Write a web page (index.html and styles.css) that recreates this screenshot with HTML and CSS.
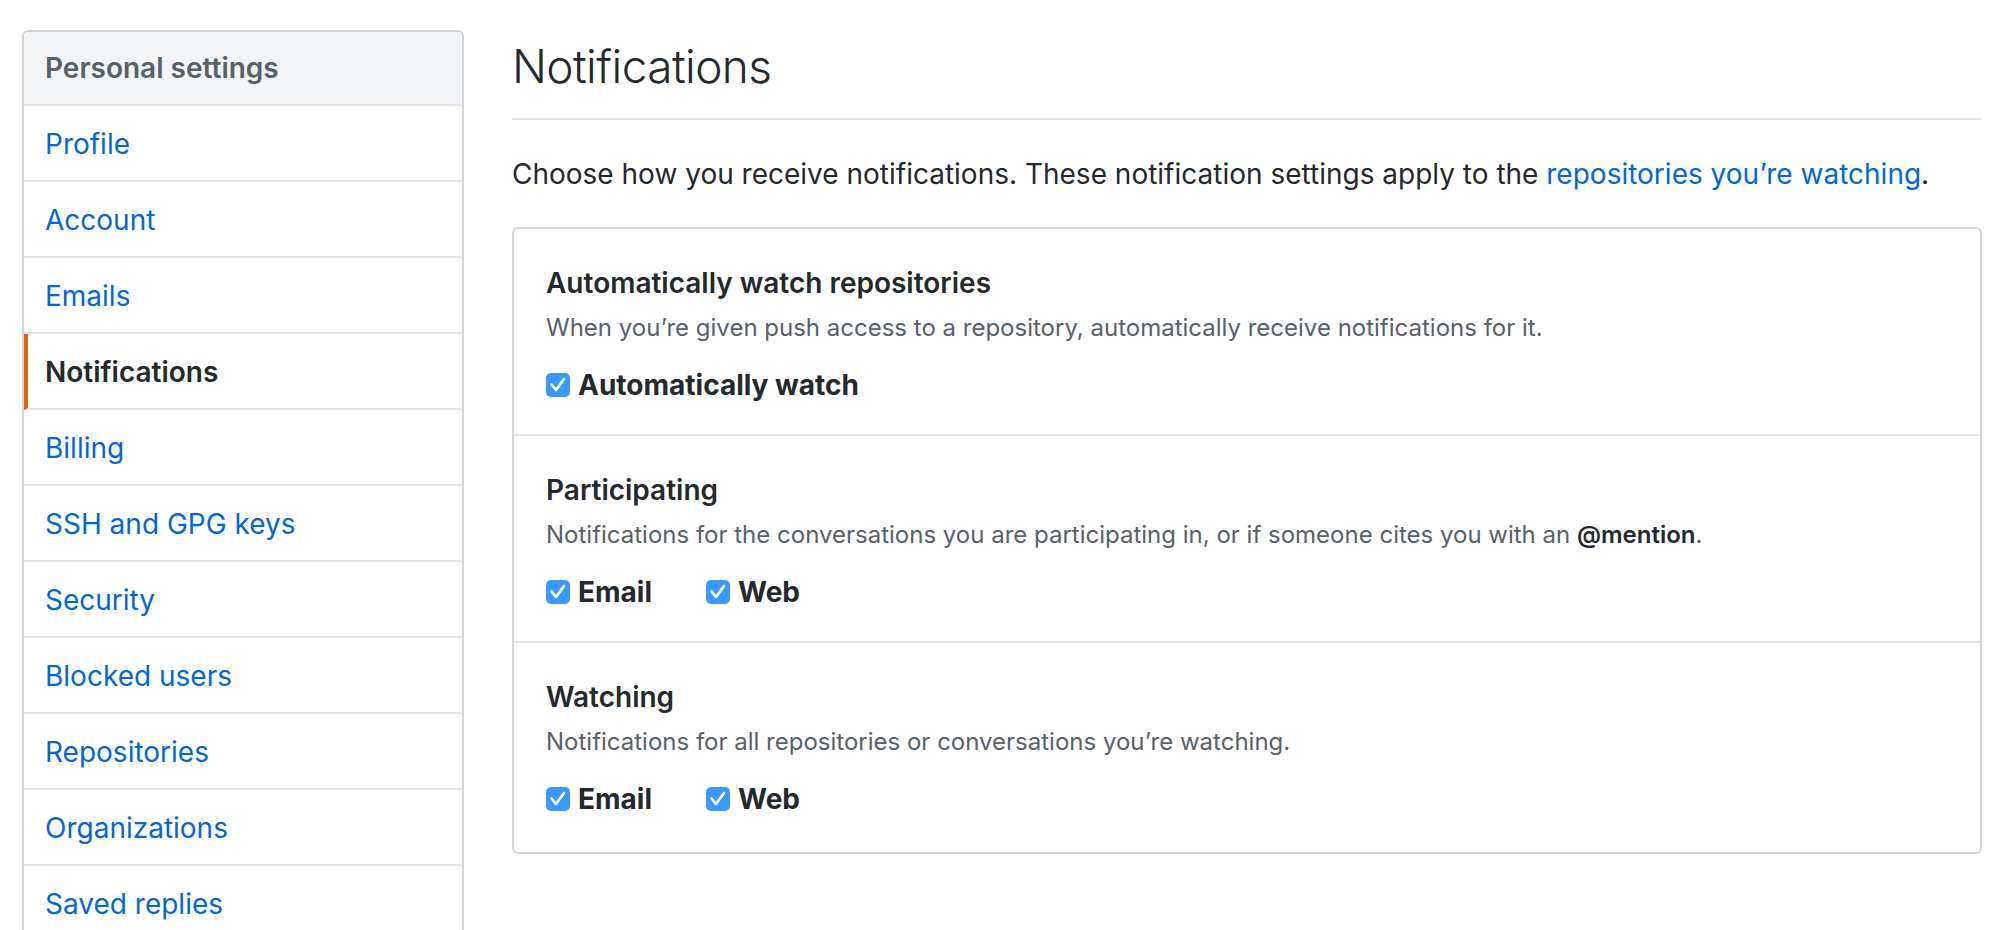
FILE: index.html
```html
<!DOCTYPE html>
<html lang="en">
<head>
    <meta charset="UTF-8">
    <title>Notifications settings</title>
    <link rel="stylesheet" href="styles.css">
</head>
<body>
    <div class="page">
        <nav class="menu">
            <div class="menu-heading">Personal settings</div>
            <a class="menu-item" href="#">Profile</a>
            <a class="menu-item" href="#">Account</a>
            <a class="menu-item" href="#">Emails</a>
            <a class="menu-item selected" href="#">Notifications</a>
            <a class="menu-item" href="#">Billing</a>
            <a class="menu-item" href="#">SSH and GPG keys</a>
            <a class="menu-item" href="#">Security</a>
            <a class="menu-item" href="#">Blocked users</a>
            <a class="menu-item" href="#">Repositories</a>
            <a class="menu-item" href="#">Organizations</a>
            <a class="menu-item" href="#">Saved replies</a>
        </nav>

        <main class="content">
            <h2 class="subhead">Notifications</h2>
            <p class="intro">Choose how you receive notifications. These notification settings apply to the <a href="#">repositories you’re watching</a>.</p>

            <div class="box">
                <div class="box-row">
                    <h4 class="row-title">Automatically watch repositories</h4>
                    <p class="note">When you’re given push access to a repository, automatically receive notifications for it.</p>
                    <div class="checks">
                        <label class="check"><span class="tick"><svg viewBox="0 0 24 24"><path d="M5.5 11.5 L10 17 L18 6"/></svg></span>Automatically watch</label>
                    </div>
                </div>
                <div class="box-row">
                    <h4 class="row-title">Participating</h4>
                    <p class="note">Notifications for the conversations you are participating in, or if someone cites you with an <strong>@mention</strong>.</p>
                    <div class="checks">
                        <label class="check"><span class="tick"><svg viewBox="0 0 24 24"><path d="M5.5 11.5 L10 17 L18 6"/></svg></span>Email</label>
                        <label class="check"><span class="tick"><svg viewBox="0 0 24 24"><path d="M5.5 11.5 L10 17 L18 6"/></svg></span>Web</label>
                    </div>
                </div>
                <div class="box-row">
                    <h4 class="row-title">Watching</h4>
                    <p class="note">Notifications for all repositories or conversations you’re watching.</p>
                    <div class="checks">
                        <label class="check"><span class="tick"><svg viewBox="0 0 24 24"><path d="M5.5 11.5 L10 17 L18 6"/></svg></span>Email</label>
                        <label class="check"><span class="tick"><svg viewBox="0 0 24 24"><path d="M5.5 11.5 L10 17 L18 6"/></svg></span>Web</label>
                    </div>
                </div>
            </div>
        </main>
    </div>
</body>
</html>
```

FILE: styles.css
```css
body {
    margin: 0;
    font-family: Inter, "Liberation Sans", Arial, sans-serif;
    color: #24292e;
    background: #fff;
}
a {
    color: #0366d6;
    text-decoration: none;
}
.page {
    display: flex;
    align-items: flex-start;
    gap: 48px;
    padding: 30px 24px 0 22px;
}
.menu {
    display: flex;
    flex-direction: column;
    width: 442px;
    flex-shrink: 0;
    box-sizing: border-box;
    border: 2px solid #d1d5da;
    border-radius: 6px;
    overflow: hidden;
}
.menu-heading {
    padding: 16px 21px 16px;
    font-size: 28px;
    line-height: 40px;
    font-weight: 600;
    color: #586069;
    background: #f3f4f6;
    border-bottom: 2px solid #e1e4e8;
}
.menu-item {
    padding: 18px 21px 16px;
    font-size: 28px;
    line-height: 40px;
    border-bottom: 2px solid #e1e4e8;
}
.menu-item.selected {
    padding-left: 17px;
    border-left: 4px solid #e36209;
    color: #24292e;
    font-weight: 600;
}
.content {
    flex: 1;
}
.subhead {
    margin: 6px 0 0;
    padding-bottom: 22px;
    font-size: 46px;
    line-height: 60px;
    font-weight: 300;
    letter-spacing: -0.6px;
    border-bottom: 2px solid #e1e4e8;
}
.intro {
    margin: 34px 0 33px;
    font-size: 28px;
    line-height: 40px;
}
.box {
    border: 2px solid #d1d5da;
    border-radius: 6px;
}
.box-row {
    padding: 34px 32px 29px;
    border-top: 2px solid #e1e4e8;
}
.box-row:first-child {
    border-top: none;
}
.box-row:last-child {
    padding-bottom: 33px;
}
.row-title {
    margin: 0 0 7px;
    font-size: 28px;
    line-height: 40px;
    font-weight: 600;
}
.note {
    margin: 0 0 19px;
    font-size: 24px;
    line-height: 36px;
    color: #586069;
}
.note strong {
    color: #24292e;
    font-weight: 600;
}
.checks {
    display: flex;
    gap: 54px;
}
.check {
    display: flex;
    align-items: center;
    gap: 8px;
    font-size: 28px;
    line-height: 40px;
    font-weight: 700;
}
.tick {
    display: flex;
    width: 24px;
    height: 24px;
    border-radius: 5px;
    background: #3b99fc;
}
.tick svg {
    width: 24px;
    height: 24px;
    fill: none;
    stroke: #fff;
    stroke-width: 2.6;
    stroke-linecap: round;
    stroke-linejoin: round;
}
```
